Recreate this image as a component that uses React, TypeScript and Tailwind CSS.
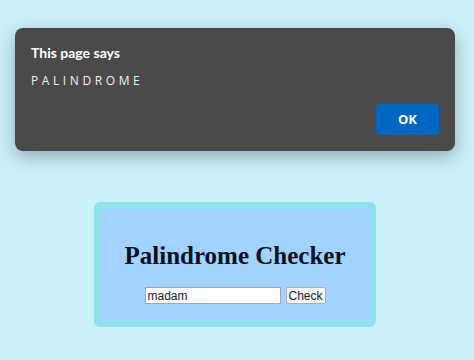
import { useState } from 'react';

function AlertDialog({ message }: { message: string }) {
  return (
    <div
      className="absolute left-[15px] top-[28px] w-[440px] h-[123px] rounded-lg bg-[#4a4a4a] shadow-[0_6px_18px_rgba(0,0,0,0.28)] text-white"
      style={{ fontFamily: '"Open Sans", "Noto Sans", sans-serif' }}
    >
      <div className="px-4 pt-[15px]">
        <div
          className="text-[14px] font-bold leading-[20px]"
          style={{ fontFamily: 'Lato, "Open Sans", sans-serif' }}
        >
          This page says
        </div>
        <div className="mt-[9px] text-[12px] tracking-[0.3em] leading-[18px] text-[#f0f0f0]">
          {message}
        </div>
      </div>
      <button className="absolute right-4 bottom-4 w-[63px] h-[31px] rounded-[3px] bg-[#0067c0] text-[13px] font-bold text-white">
        OK
      </button>
    </div>
  );
}

export default function App() {
  const [word, setWord] = useState('madam');

  return (
    <div className="relative min-h-[360px] bg-[#caf0f8]">
      <div className="pt-[202px] pl-[94px]">
        <div className="w-[282px] h-[125px] rounded-[6px] border-[7px] border-[#90e0ef] bg-[#a2d2ff] flex flex-col items-center pt-[32px]">
          <h1
            className="text-[25px] font-bold leading-[30px] text-[#0a1020]"
            style={{ fontFamily: '"Liberation Serif", serif' }}
          >
            Palindrome Checker
          </h1>
          <div
            className="mt-[16px] flex items-center gap-[5px]"
            style={{ fontFamily: '"Liberation Sans", Arial, sans-serif' }}
          >
            <input
              value={word}
              onChange={(e) => setWord(e.target.value)}
              className="w-[136px] h-[17px] bg-white border border-[#9aa7b5] px-[2px] text-[12px] text-[#222] outline-none"
            />
            <button className="w-[40px] h-[17px] bg-[#f5f5f5] border border-[#b0b0b0] rounded-[2px] text-[12px] text-[#222] leading-none">
              Check
            </button>
          </div>
        </div>
      </div>
      <AlertDialog message="PALINDROME" />
    </div>
  );
}
